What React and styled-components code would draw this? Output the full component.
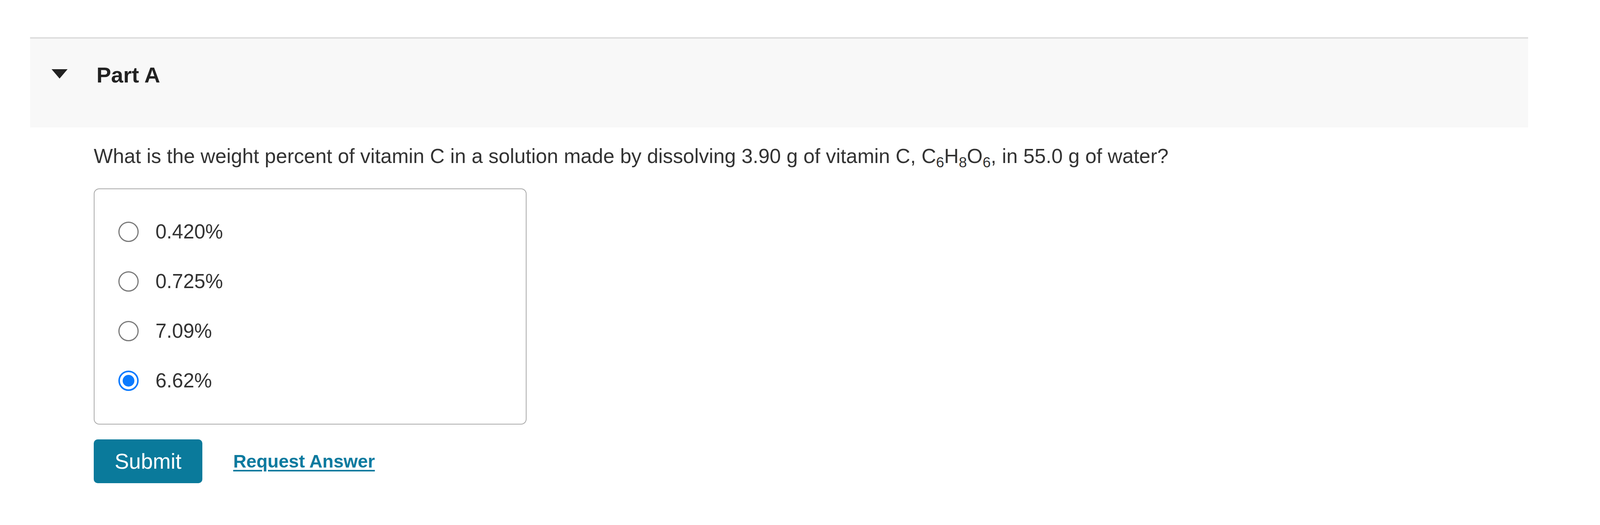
import React, { useState } from 'react';
import styled, { createGlobalStyle, css } from 'styled-components';

const GlobalStyle = createGlobalStyle`
  html, body {
    margin: 0;
    padding: 0;
    background: #fff;
  }
  body {
    font-family: "Liberation Sans", Arial, Helvetica, sans-serif;
    color: #333;
  }
`;

const Page = styled.div`
  padding: 95px 184px 0 77px;
`;

const PartHeader = styled.div`
  display: flex;
  align-items: flex-start;
  box-sizing: border-box;
  height: 231px;
  border-top: 4px solid #dedede;
  background: #f8f8f8;
  padding: 65px 0 0 55px;
`;

const Caret = styled.svg`
  width: 41px;
  height: 24px;
  margin-top: 13px;
  flex-shrink: 0;
`;

const PartTitle = styled.h2`
  margin: 0 0 0 74px;
  font-size: 56px;
  font-weight: 700;
  color: #222;
  line-height: 56px;
`;

const Body = styled.div`
  padding-left: 163px;
`;

const Question = styled.p`
  margin: 43px 0 0;
  font-size: 51.8px;
  line-height: 60px;
  color: #333;

  sub {
    font-size: 0.72em;
    line-height: 0;
    vertical-align: -0.3em;
  }
`;

const Choices = styled.div`
  display: flex;
  flex-direction: column;
  width: 1108px;
  margin-top: 53px;
  padding: 45px 0 47px 61px;
  border: 2px solid #a9a9a9;
  border-radius: 14px;
  box-sizing: border-box;
`;

const ChoiceRow = styled.label`
  display: flex;
  align-items: center;
  height: 127px;
  cursor: pointer;
`;

const RadioDot = styled.span`
  position: relative;
  width: 52px;
  height: 52px;
  border-radius: 50%;
  border: 3px solid #7a7a7a;
  box-sizing: border-box;
  flex-shrink: 0;
  background: #fff;
  ${(props) =>
    props.checked &&
    css`
      border: 4px solid #0a7aff;
      &::after {
        content: '';
        position: absolute;
        left: 7px;
        top: 7px;
        width: 30px;
        height: 30px;
        border-radius: 50%;
        background: #0a7aff;
      }
    `};
`;

const ChoiceText = styled.span`
  margin-left: 43px;
  font-size: 51px;
  color: #333;
`;

const Actions = styled.div`
  display: flex;
  align-items: center;
  margin-top: 38px;
`;

const SubmitButton = styled.button`
  width: 278px;
  height: 112px;
  border: none;
  border-radius: 10px;
  background: #0a7a9b;
  color: #fff;
  font-family: "Liberation Sans", Arial, sans-serif;
  font-size: 55px;
  cursor: pointer;
`;

const RequestLink = styled.a`
  margin-left: 79px;
  font-size: 46.5px;
  font-weight: 700;
  color: #0b7a9e;
  text-decoration: underline;
  text-decoration-thickness: 4px;
  text-underline-offset: 6px;
  cursor: pointer;
`;

const options = ['0.420%', '0.725%', '7.09%', '6.62%'];

const App = () => {
  const [selected, setSelected] = useState(3);
  return (
    <>
      <GlobalStyle />
      <Page>
        <PartHeader>
          <Caret viewBox="0 0 41 24">
            <polygon points="0,0 41,0 20.5,24" fill="#222" />
          </Caret>
          <PartTitle>Part A</PartTitle>
        </PartHeader>
        <Body>
          <Question>
            What is the weight percent of vitamin C in a solution made by dissolving 3.90 g of
            vitamin C, C<sub>6</sub>H<sub>8</sub>O<sub>6</sub>, in 55.0 g of water?
          </Question>
          <Choices>
            {options.map((opt, i) => (
              <ChoiceRow key={opt} onClick={() => setSelected(i)}>
                <RadioDot checked={selected === i} />
                <ChoiceText>{opt}</ChoiceText>
              </ChoiceRow>
            ))}
          </Choices>
          <Actions>
            <SubmitButton>Submit</SubmitButton>
            <RequestLink>Request Answer</RequestLink>
          </Actions>
        </Body>
      </Page>
    </>
  );
};

export default App;
